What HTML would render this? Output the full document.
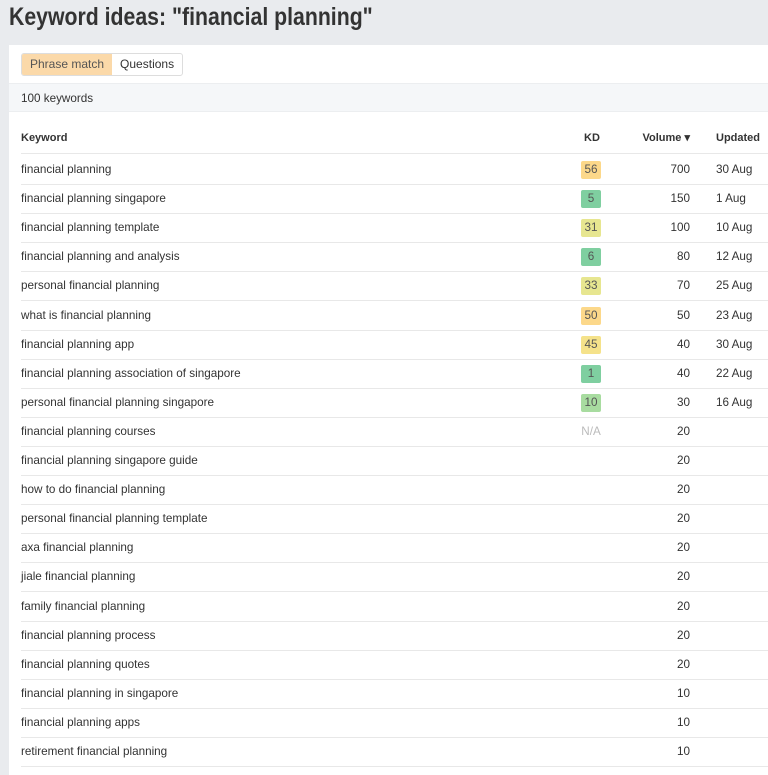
<!DOCTYPE html>
<html><head><style>
body{margin:0;width:768px;height:769px;overflow:hidden;background:#e9ebee;font-family:"Liberation Sans",Arial,sans-serif;color:#333}
h1{position:absolute;left:9px;top:3px;margin:0;font-size:25px;font-weight:bold;color:#333;transform:scaleX(0.85);transform-origin:left top;white-space:nowrap}
.panel{position:absolute;left:9px;top:45px;width:759px;height:730px;background:#fff}
.tog{position:absolute;left:12px;top:8px;height:21px;border:1px solid #ddd;border-radius:3px;display:flex;font-size:12px;overflow:hidden}
.tog div{padding:0 8px;line-height:21px}
.tog .a{background:#fbd9a9;color:#555}
.band{position:absolute;left:0;top:38px;width:759px;height:29px;background:#f5f7f9;border-top:1px solid #eceef0;border-bottom:1px solid #eceef0;font-size:11.7px;line-height:29px;padding-left:12px;box-sizing:border-box}
.row{position:absolute;left:12px;width:747px;height:29px;border-bottom:1px solid #e8e8e8;font-size:11.7px;line-height:29px}
.row>span{position:absolute}
.k{left:0}.d{left:560px;width:20px;text-align:center}
.v{right:78px;text-align:right}.u{left:695px}
.b{position:static;display:inline-block;width:20px;height:18px;line-height:18px;border-radius:2px;margin-top:5px;color:#555}
.hd{font-weight:bold;font-size:11px}
.o{background:#fcd88a}.g{background:#7fcfa0}.y{background:#e7e690}.lg{background:#a8dca0}.yo{background:#f5e28a}
</style></head><body>
<h1>Keyword ideas: "financial planning"</h1>
<div class="panel">
<div class="tog"><div class="a">Phrase match</div><div>Questions</div></div>
<div class="band">100 keywords</div>
<div class="row hd" style="top:79px"><span class="k">Keyword</span><span class="d" style="left:561px">KD</span><span class="v" style="right:78px">Volume ▾</span><span class="u">Updated</span></div>
<div id="rows"></div>
</div>
<script>
var d=[["financial planning","56","o","700","30 Aug"],["financial planning singapore","5","g","150","1 Aug"],["financial planning template","31","y","100","10 Aug"],["financial planning and analysis","6","g","80","12 Aug"],["personal financial planning","33","y","70","25 Aug"],["what is financial planning","50","o","50","23 Aug"],["financial planning app","45","yo","40","30 Aug"],["financial planning association of singapore","1","g","40","22 Aug"],["personal financial planning singapore","10","lg","30","16 Aug"],["financial planning courses","N/A","","20",""],["financial planning singapore guide","","","20",""],["how to do financial planning","","","20",""],["personal financial planning template","","","20",""],["axa financial planning","","","20",""],["jiale financial planning","","","20",""],["family financial planning","","","20",""],["financial planning process","","","20",""],["financial planning quotes","","","20",""],["financial planning in singapore","","","10",""],["financial planning apps","","","10",""],["retirement financial planning","","","10",""]];
var h="";d.forEach(function(r,i){var top=110+i*29.1;var kd=r[1]==="N/A"?'<span class="d" style="color:#bbb">N/A</span>':(r[1]?'<span class="d"><span class="b '+r[2]+'">'+r[1]+'</span></span>':'');
h+='<div class="row" style="top:'+top+'px"><span class="k">'+r[0]+'</span>'+kd+'<span class="v">'+r[3]+'</span><span class="u">'+r[4]+'</span></div>';});
document.getElementById("rows").innerHTML=h;
</script>
</body></html>
